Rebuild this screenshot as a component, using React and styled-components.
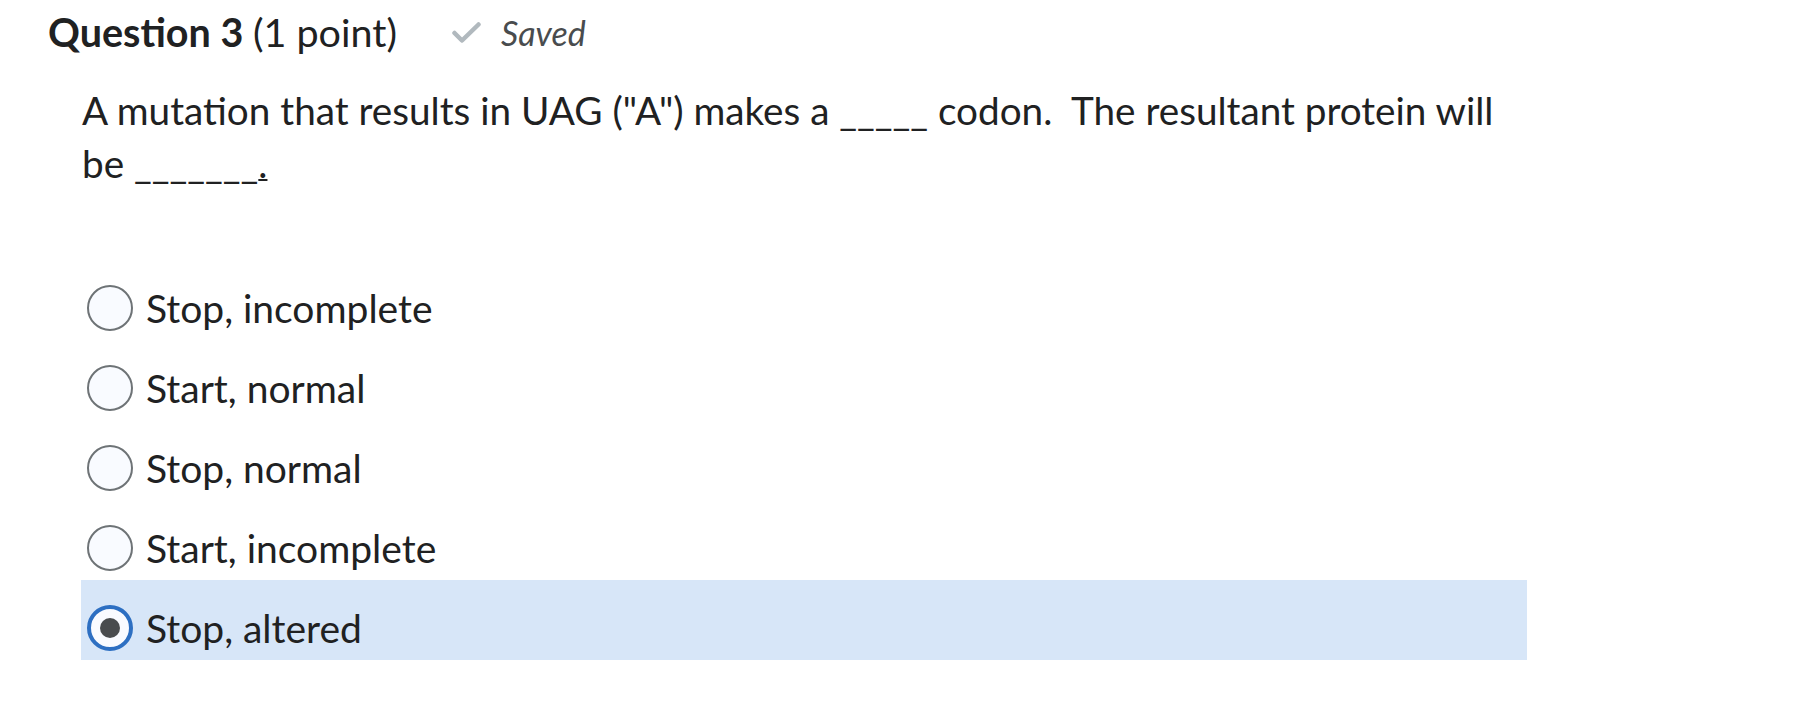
import React from "react";
import styled, { createGlobalStyle } from "styled-components";

const GlobalStyle = createGlobalStyle`
  body {
    margin: 0;
    background: #ffffff;
    font-family: Lato, "Open Sans", sans-serif;
    color: #202122;
  }
`

const Page = styled.div`
  padding: 9px 0 0 48px;
`

const Header = styled.div`
  display: flex;
  align-items: center;
  height: 46px;
`

const Titulo = styled.h2`
  margin: 0;
  font-size: 39.5px;
  line-height: 46px;
  font-weight: 700;
  color: #202122;
  span {
    font-weight: 400;
  }
`

const Salvo = styled.div`
  display: flex;
  align-items: center;
  margin-left: 55px;
  gap: 20px;
  font-size: 34px;
  font-style: italic;
  color: #494c4e;
`

const Corpo = styled.div`
  margin: 29px 0 0 33px;
  width: 1446px;
`

const Enunciado = styled.p`
  margin: 0;
  padding-left: 1px;
  font-size: 38.7px;
  line-height: 53px;
`

const Lacuna = styled.span`
  white-space: nowrap;
  u {
    text-decoration-thickness: 2px;
  }
`

const Lista = styled.div`
  display: flex;
  flex-direction: column;
  margin-top: 70px;
`

const Opcao = styled.label`
  display: flex;
  align-items: center;
  gap: 13px;
  height: 80px;
  box-sizing: border-box;
  padding: 25px 0 9px 6px;
  font-size: 39px;
  background: ${(p) => (p.marcada ? "#d7e6f8" : "transparent")};
`

const Radio = styled.span`
  width: 46px;
  height: 46px;
  box-sizing: border-box;
  border-radius: 50%;
  flex-shrink: 0;
  display: flex;
  align-items: center;
  justify-content: center;
  background: #f9fbff;
  border: ${(p) => (p.marcada ? "4px solid #2d6fc2" : "2px solid #6e7376")};
`

const Ponto = styled.span`
  width: 20px;
  height: 20px;
  border-radius: 50%;
  background: #494c4e;
`

const opcoes = [
  "Stop, incomplete",
  "Start, normal",
  "Stop, normal",
  "Start, incomplete",
  "Stop, altered",
];

export default function App() {
  const selecionada = 4;
  return (
    <>
      <GlobalStyle />
      <Page>
        <Header>
          <Titulo>
            Question 3 <span>(1 point)</span>
          </Titulo>
          <Salvo>
            <svg width="29" height="21" viewBox="0 0 29 21">
              <polyline
                points="2.5,11 10,18.5 26.5,2.5"
                fill="none"
                stroke="#b1b9be"
                strokeWidth="4.5"
                strokeLinecap="round"
                strokeLinejoin="round"
              />
            </svg>
            Saved
          </Salvo>
        </Header>
        <Corpo>
          <Enunciado>
            A mutation that results in UAG ("A") makes a _____ codon.&nbsp; The
            resultant protein will be <Lacuna>_______<u>.</u></Lacuna>
          </Enunciado>
          <Lista>
            {opcoes.map((texto, i) => (
              <Opcao key={texto} marcada={i === selecionada}>
                <Radio marcada={i === selecionada}>
                  {i === selecionada ? <Ponto /> : null}
                </Radio>
                {texto}
              </Opcao>
            ))}
          </Lista>
        </Corpo>
      </Page>
    </>
  );
}
